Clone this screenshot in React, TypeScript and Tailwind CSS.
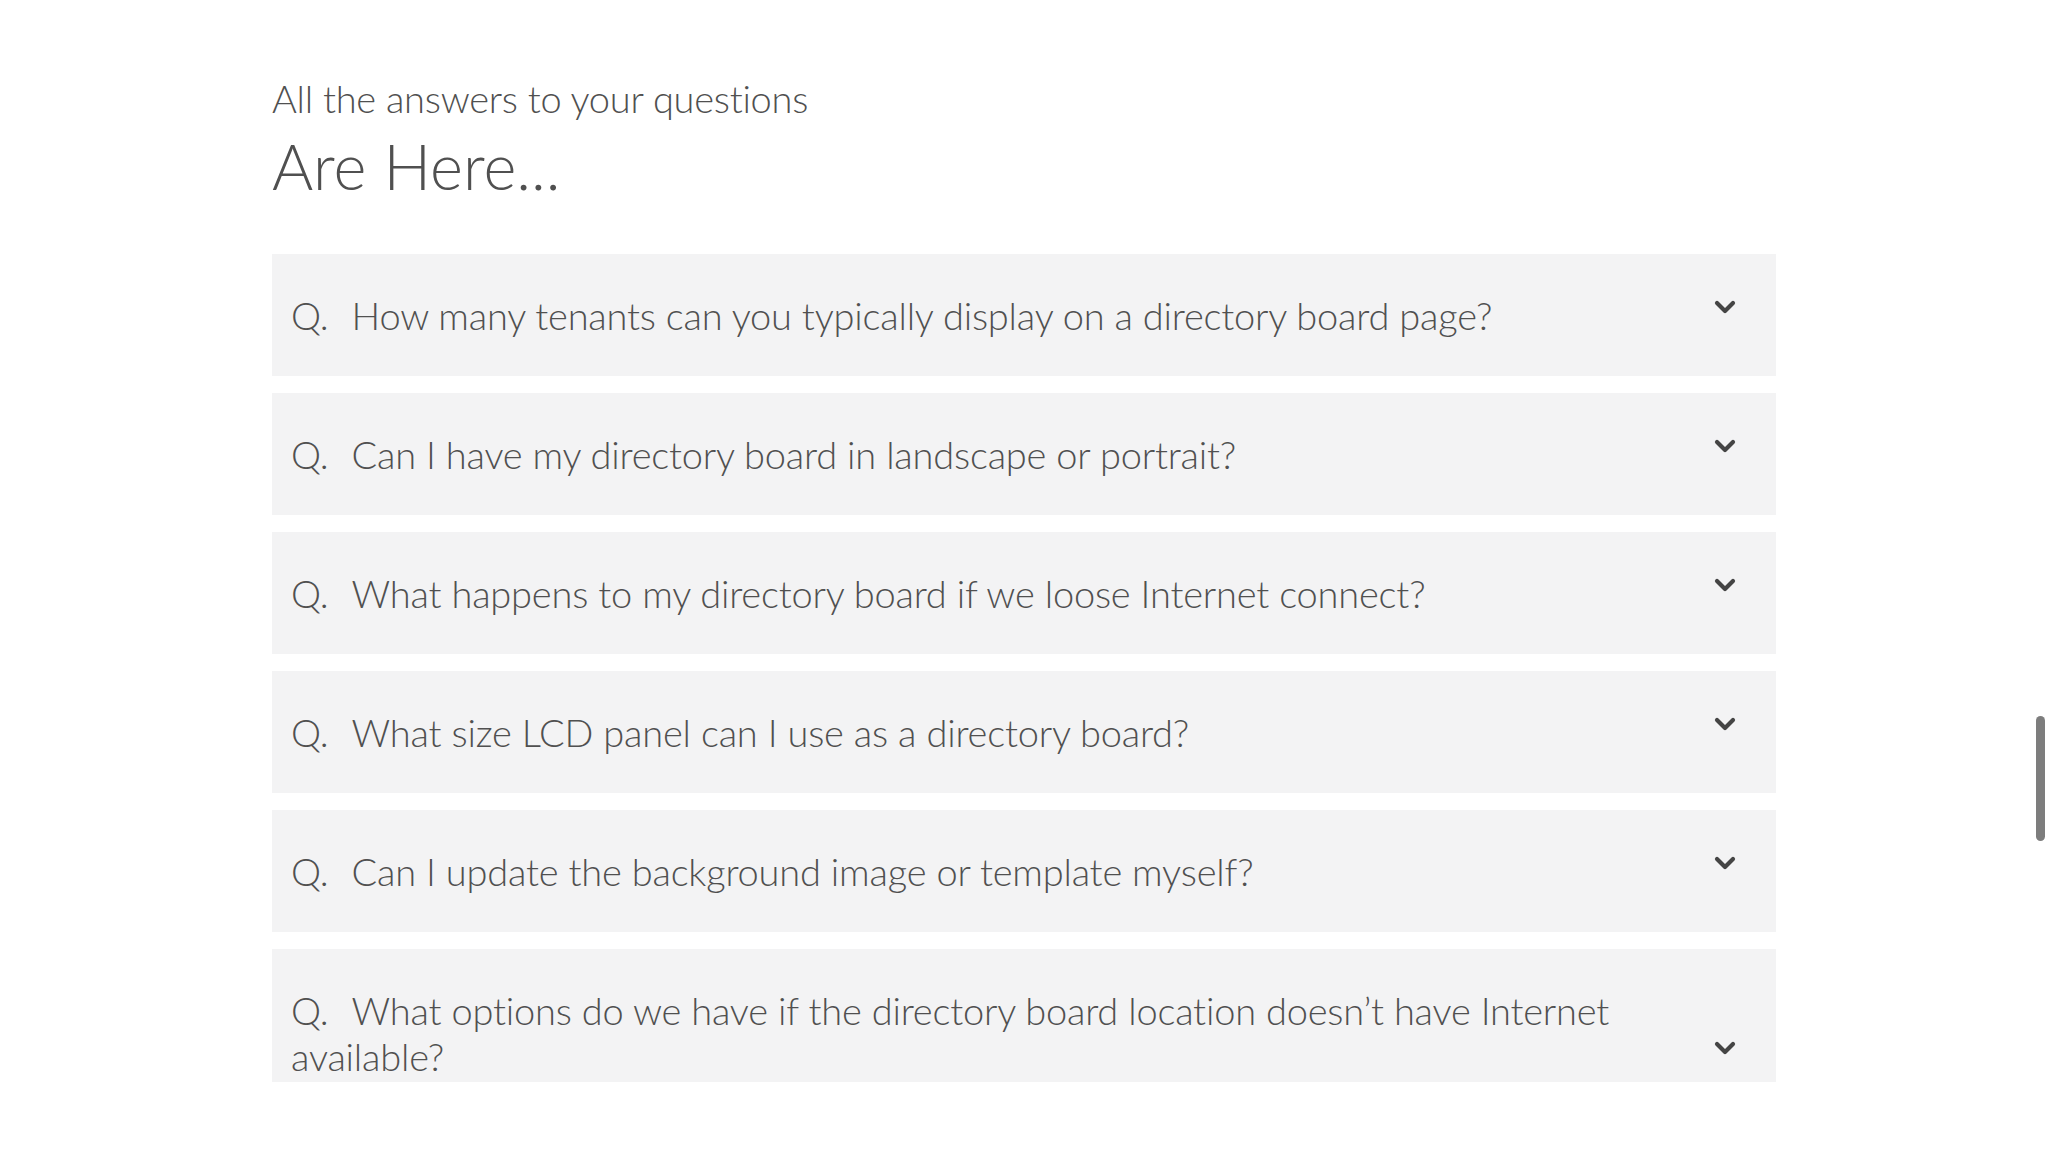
import React from 'react';

const questions = [
  'How many tenants can you typically display on a directory board page?',
  'Can I have my directory board in landscape or portrait?',
  'What happens to my directory board if we loose Internet connect?',
  'What size LCD panel can I use as a directory board?',
  'Can I update the background image or template myself?',
  'What options do we have if the directory board location doesn\u2019t have Internet available?',
];

function Chevron() {
  return (
    <svg width="22" height="14" viewBox="0 0 22 14" fill="none">
      <polyline points="3,3 11,11 19,3" stroke="#444" strokeWidth="4.2" strokeLinecap="round" strokeLinejoin="round" />
    </svg>
  );
}

export default function App() {
  return (
    <div className="min-h-screen bg-white" style={{ fontFamily: 'Lato, "Open Sans", sans-serif' }}>
      <div className="mx-auto w-[1504px] pt-[76px]">
        <p className="text-[38px] leading-[44px] font-light tracking-[-0.25px] text-[#505050]">All the answers to your questions</p>
        <h2 className="mt-[9px] text-[63px] leading-[74px] font-light text-[#505050]">Are Here...</h2>

        {/* FAQ list, bottom of the last item is clipped by the section */}
        <div className="mt-[51px] h-[828px] overflow-hidden flex flex-col gap-[17px]">
          {questions.map((q) => (
            <div key={q} className="flex items-end bg-[#f3f3f4] pl-[19px] pr-[40px] py-[38px]">
              <p className="flex-1 pr-[50px] text-[38px] leading-[46px] font-light tracking-[-0.2px] text-[#505050]">
                <span className="mr-[23px]">Q.</span>
                {q}
              </p>
              <div className="h-[46px] pt-[8px]">
                <Chevron />
              </div>
            </div>
          ))}
        </div>
      </div>

      {/* overlay scrollbar */}
      <div className="fixed right-[3px] top-[716px] w-[9px] h-[125px] rounded-full bg-[#7d7d7d]" />
    </div>
  );
}
